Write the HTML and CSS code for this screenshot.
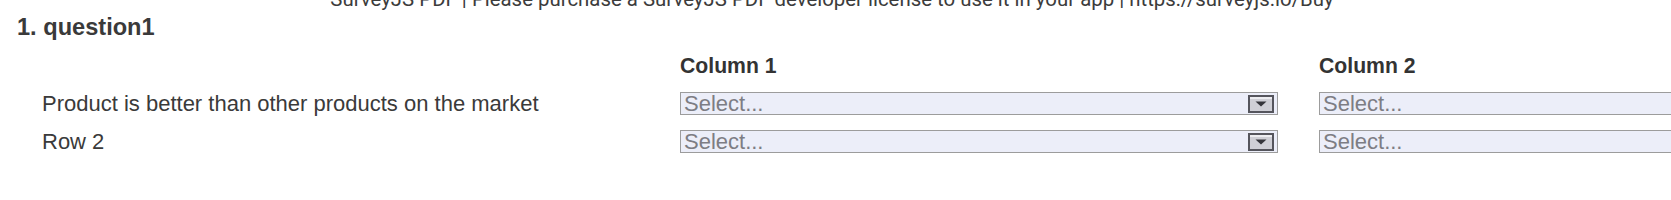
FILE: index.html
```html
<!DOCTYPE html>
<html lang="en">
  <head>
    <meta charset="UTF-8" />
    <title>question1</title>
    <link rel="stylesheet" href="styles.css">
  </head>
  <body>
    <div class="watermark">
      SurveyJS PDF | Please purchase a SurveyJS PDF developer license to use it in your app | https://surveyjs.io/Buy
    </div>

    <h1 class="question-title">1. question1</h1>

    <div class="matrix">
      <div class="matrix-cell"></div>
      <div class="matrix-header">Column 1</div>
      <div class="matrix-header">Column 2</div>

      <div class="matrix-row-title">Product is better than other products on the market</div>
      <div class="dropdown">
        <span class="dropdown-text">Select...</span>
        <svg class="dropdown-btn" width="26" height="18" viewBox="0 0 26 18">
          <rect x="0" y="0" width="26" height="18" fill="#55555d" />
          <rect x="2" y="2" width="22" height="14" fill="#cfcfd6" />
          <rect x="2" y="2" width="22" height="2" fill="#ededf1" />
          <polygon points="7.5,6.5 18.5,6.5 13,11.5" fill="#35353b" />
        </svg>
      </div>
      <div class="dropdown">
        <span class="dropdown-text">Select...</span>
      </div>

      <div class="matrix-row-title">Row 2</div>
      <div class="dropdown">
        <span class="dropdown-text">Select...</span>
        <svg class="dropdown-btn" width="26" height="18" viewBox="0 0 26 18">
          <rect x="0" y="0" width="26" height="18" fill="#55555d" />
          <rect x="2" y="2" width="22" height="14" fill="#cfcfd6" />
          <rect x="2" y="2" width="22" height="2" fill="#ededf1" />
          <polygon points="7.5,6.5 18.5,6.5 13,11.5" fill="#35353b" />
        </svg>
      </div>
      <div class="dropdown">
        <span class="dropdown-text">Select...</span>
      </div>
    </div>
  </body>
</html>
```

FILE: styles.css
```css
* {
  margin: 0;
  padding: 0;
  box-sizing: border-box;
}

html,
body {
  overflow: hidden;
}

body {
  font-family: "Liberation Sans", Arial, sans-serif;
  color: #3a3a3a;
  background: #fff;
  width: 1671px;
  height: 200px;
}

.watermark {
  font-family: Roboto, "Liberation Sans", sans-serif;
  font-size: 20.4px;
  line-height: 20px;
  height: 20px;
  margin-top: -11.5px;
  padding-right: 7px;
  text-align: center;
  white-space: nowrap;
  color: #3c3c3c;
}

.question-title {
  font-size: 23.6px;
  font-weight: 700;
  line-height: 28px;
  margin-top: 4.4px;
  padding-left: 17px;
  color: #3a3a3a;
}

.matrix {
  display: grid;
  grid-template-columns: 597px 598px 598px;
  column-gap: 41px;
  row-gap: 14.5px;
  padding-left: 42px;
  margin-top: 12px;
  width: 2000px;
}

.matrix-header {
  font-size: 21.2px;
  font-weight: 700;
  line-height: 25px;
  color: #333;
}

.matrix-row-title {
  font-size: 22px;
  line-height: 23px;
  white-space: nowrap;
  color: #3a3a3a;
}

.dropdown {
  display: flex;
  align-items: flex-start;
  height: 23px;
  border: 1px solid #9c9c9c;
  background: #eceef9;
  padding-left: 3px;
}

.dropdown-text {
  flex: 1;
  font-size: 22px;
  line-height: 21px;
  color: #7d7d84;
}

.dropdown-btn {
  display: block;
  margin-top: 2px;
  margin-right: 3px;
}
```
